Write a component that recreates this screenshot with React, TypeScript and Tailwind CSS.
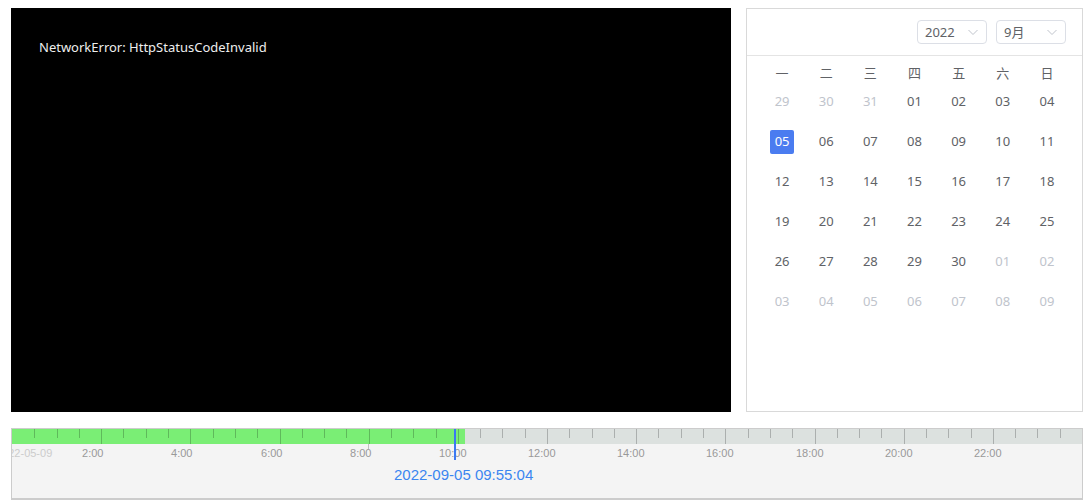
import React from "react";

const weekdays = ["一", "二", "三", "四", "五", "六", "日"];

type Day = { d: string; cur: boolean; sel?: boolean };

function buildDays(): Day[][] {
  const days: Day[] = [];
  ["29", "30", "31"].forEach((d) => days.push({ d, cur: false }));
  for (let i = 1; i <= 30; i++) {
    const d = i < 10 ? "0" + i : String(i);
    days.push({ d, cur: true, sel: i === 5 });
  }
  for (let i = 1; i <= 9; i++) days.push({ d: "0" + i, cur: false });
  const rows: Day[][] = [];
  for (let r = 0; r < 6; r++) rows.push(days.slice(r * 7, r * 7 + 7));
  return rows;
}

function Chevron() {
  return (
    <svg width="12" height="12" viewBox="0 0 12 12" fill="none">
      <path d="M1.5 4 L6 8.5 L10.5 4" stroke="#c0c4cc" strokeWidth="1" />
    </svg>
  );
}

const W = 1070;
const HALF = W / 48;

function Ruler() {
  const ticks = [];
  for (let i = 1; i < 48; i++) {
    const x = Math.round(i * HALF) + 0.5;
    const major = i % 4 === 0;
    ticks.push(
      <line
        key={i}
        x1={x}
        x2={x}
        y1={0}
        y2={major ? 15 : 9}
        stroke="rgba(0,0,0,0.22)"
        strokeWidth="1"
      />
    );
  }
  return (
    <svg width={W} height="20" className="absolute left-0 top-0">
      <rect x="0" y="0" width={W} height="15" fill="#dce1df" />
      <rect x="0" y="0" width="453" height="15" fill="#7aee75" />
      {ticks}
      <line x1={356.5} x2={356.5} y1={15} y2={20} stroke="rgba(0,0,0,0.22)" />
    </svg>
  );
}

export default function App() {
  const rows = buildDays();
  const labels = [];
  for (let h = 2; h <= 22; h += 2) {
    const x = Math.round(h * (W / 24)) - 19;
    labels.push(
      <span
        key={h}
        className="absolute top-[18px] text-[11px] leading-[13px] text-[#999]"
        style={{ left: x }}
      >
        {h}:00
      </span>
    );
  }
  return (
    <div className="w-[1087px] h-[501px] bg-white pt-[8px] pl-[11px] overflow-hidden">
      <div className="flex gap-[15px]">
        <div className="w-[720px] h-[404px] bg-black pt-[30px] pl-[28px]">
          <div
            className="text-[13px] leading-[18px] text-[#eeeeee]"
            style={{ fontFamily: '"Noto Sans", sans-serif' }}
          >
            NetworkError: HttpStatusCodeInvalid
          </div>
        </div>
        <div
          className="w-[337px] h-[404px] border border-[#d9d9d9] bg-white flex flex-col"
          style={{ fontFamily: '"Noto Sans", "Noto Sans CJK SC", sans-serif' }}
        >
          <div className="h-[47px] border-b border-[#e4e4e4] flex justify-end items-start pt-[11px] pr-[16px] gap-[9px]">
            <div className="w-[70px] h-[24px] border border-[#dcdfe6] rounded-[4px] flex items-center justify-between pl-[7px] pr-[7px]">
              <span className="text-[13px] text-[#606266] leading-[16px]">2022</span>
              <Chevron />
            </div>
            <div className="w-[70px] h-[24px] border border-[#dcdfe6] rounded-[4px] flex items-center justify-between pl-[7px] pr-[7px]">
              <span className="text-[13px] text-[#606266] leading-[16px]">9月</span>
              <Chevron />
            </div>
          </div>
          <div className="px-[13px]">
            <div className="grid grid-cols-7 h-[25px] items-end">
              {weekdays.map((w) => (
                <div key={w} className="text-center text-[13px] leading-[16px] text-[#606266]">
                  {w}
                </div>
              ))}
            </div>
            <div className="mt-[1px]">
              {rows.map((r, ri) => (
                <div key={ri} className="grid grid-cols-7 h-[40px] items-center">
                  {r.map((d, di) => (
                    <div key={di} className="flex justify-center">
                      <span
                        className={
                          "w-[24px] h-[24px] flex items-center justify-center text-[13px] rounded-[2px] " +
                          (d.sel
                            ? "bg-[#4a7cf0] text-white"
                            : d.cur
                            ? "text-[#606266]"
                            : "text-[#c0c4cc]")
                        }
                      >
                        {d.d}
                      </span>
                    </div>
                  ))}
                </div>
              ))}
            </div>
          </div>
        </div>
      </div>
      <div
        className="mt-[16px] w-[1072px] h-[72px] border border-b-2 border-[#cccccc] bg-[#f4f4f4] relative overflow-hidden"
        style={{ fontFamily: '"Liberation Sans", Arial, sans-serif' }}
      >
        <Ruler />
        <span className="absolute top-[18px] left-[-16px] text-[11px] leading-[13px] text-[#cccccc]">
          2022-05-09
        </span>
        {labels}
        <div className="absolute left-[442px] top-0 w-[2px] h-[31px] bg-[#3a78f2]" />
        <span className="absolute left-[382px] top-[37px] text-[15px] leading-[17px] text-[#3b86f0]">
          2022-09-05 09:55:04
        </span>
      </div>
    </div>
  );
}
